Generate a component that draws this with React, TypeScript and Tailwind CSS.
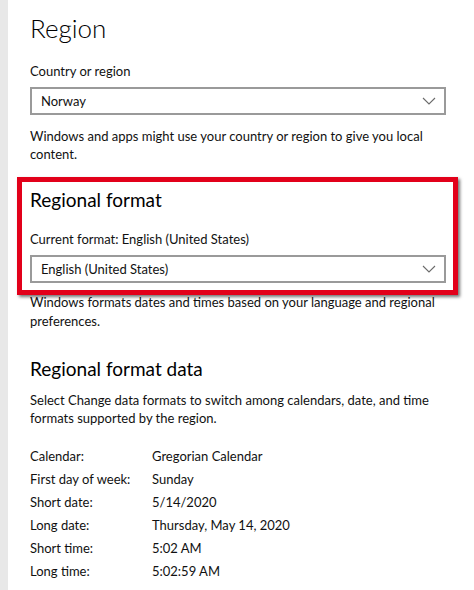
import React from "react";

const font = { fontFamily: 'Lato, "Noto Sans", sans-serif' };

function Chevron() {
  return (
    <svg width="14" height="8" viewBox="0 0 14 8" className="shrink-0">
      <path d="M1 1 L7 7 L13 1" fill="none" stroke="#6b6b6b" strokeWidth="1.1" />
    </svg>
  );
}

function Dropdown({ value }: { value: string }) {
  return (
    <div className="flex h-[28px] w-[416px] items-center justify-between border-2 border-[#9a9a9a] bg-white pl-[9px] pr-[8px]">
      <span className="text-[13px] leading-[18px] text-[#111]">{value}</span>
      <Chevron />
    </div>
  );
}

const rows: [string, string][] = [
  ["Calendar:", "Gregorian Calendar"],
  ["First day of week:", "Sunday"],
  ["Short date:", "5/14/2020"],
  ["Long date:", "Thursday, May 14, 2020"],
  ["Short time:", "5:02 AM"],
  ["Long time:", "5:02:59 AM"],
];

export default function App() {
  return (
    <div className="flex h-[590px] w-[474px] overflow-hidden bg-white text-[#111]" style={font}>
      <div className="w-[8px] shrink-0 bg-[#e8e8e8]" />
      <div className="flex flex-col pl-[22px] pt-[10px]">
        <h1 className="text-[26px] font-light leading-[36px] text-black">Region</h1>
        <div className="mt-[16px] text-[13px] leading-[18px]">Country or region</div>
        <div className="mt-[7px]">
          <Dropdown value="Norway" />
        </div>
        <p className="mt-[12px] w-[416px] text-[13px] leading-[18px]">
          Windows and apps might use your country or region to give you local content.
        </p>

        <div className="ml-[-13px] mt-[14px] w-[441px] border-[5px] border-[#e2001a] pb-[7px] pl-[8px] pr-[7px] pt-[4px] shadow-[2px_2px_3px_rgba(0,0,0,0.55)]">
          <h2 className="text-[19px] leading-[28px] text-black">Regional format</h2>
          <div className="mt-[16px] text-[13px] leading-[18px]">Current format: English (United States)</div>
          <div className="mt-[7px]">
            <Dropdown value="English (United States)" />
          </div>
        </div>

        <p className="mt-[-2px] w-[420px] text-[13px] leading-[19px]">
          Windows formats dates and times based on your language and regional preferences.
        </p>

        <h2 className="mt-[24px] text-[19px] leading-[28px] text-black">Regional format data</h2>
        <p className="mt-[8px] w-[420px] text-[13px] leading-[18px]">
          Select Change data formats to switch among calendars, date, and time formats supported by the region.
        </p>

        <div className="mt-[18px] flex flex-col">
          {rows.map(([k, v]) => (
            <div key={k} className="flex h-[23px] items-center text-[13px]">
              <span className="w-[122px] shrink-0">{k}</span>
              <span>{v}</span>
            </div>
          ))}
        </div>
      </div>
    </div>
  );
}
